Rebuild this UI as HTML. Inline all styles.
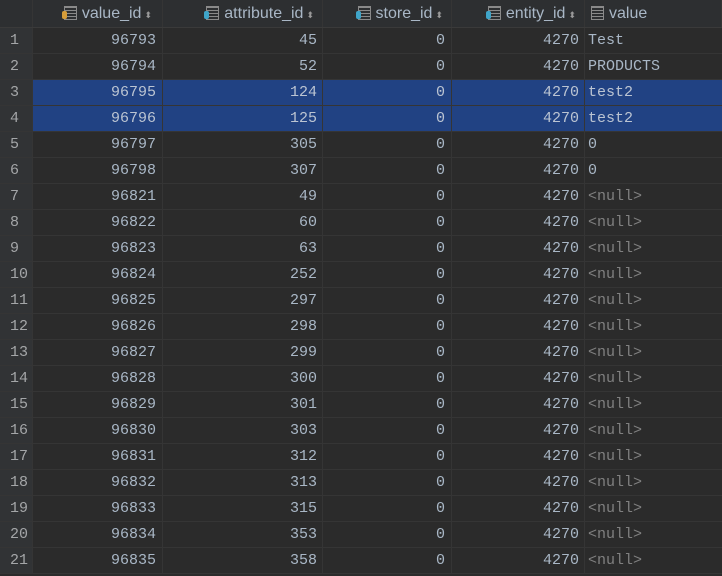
<!DOCTYPE html>
<html><head><style>
body{margin:0;width:722px;height:576px;background:#2b2b2b;overflow:hidden;position:relative;font-family:"Liberation Mono",monospace;font-size:15px;color:#a9b7c6}
.r{position:absolute;left:0;width:722px;height:25px;border-bottom:1px solid #353535;line-height:26px}
.c{position:absolute;top:0;height:100%;box-sizing:border-box;border-right:1px solid #353535;white-space:nowrap}
.g{left:0;width:33px;background:#313335;padding-left:10px;color:#a4a6a8}
.a{left:33px;width:130px;text-align:right;padding-right:6px}
.b{left:163px;width:160px;text-align:right;padding-right:5px}
.d{left:323px;width:129px;text-align:right;padding-right:6px}
.e{left:452px;width:133px;text-align:right;padding-right:5px}
.f{left:585px;width:137px;padding-left:3px;border-right:none}
.s .a,.s .b,.s .d,.s .e,.s .f{background:#214283;color:#bbc4d2}
.n{color:#808080}
.h{position:absolute;top:0;left:0;width:722px;height:27px;background:#2d2f31;border-bottom:1px solid #3a3a3a;font-family:"Liberation Sans",sans-serif;font-size:16px;line-height:27px;color:#a9b7c6}
.h .c{border-right:1px solid #353535}
.ic{display:inline-block;width:11px;height:12px;border:1px solid #8a8a8a;vertical-align:-2px;margin-right:5px;position:relative;background:repeating-linear-gradient(#8a8a8a 0 1px,transparent 1px 3px)}
.k{position:absolute;left:-3px;top:4px;width:5px;height:8px;background:#d69d3a;border-radius:2px}
.kb{background:#3fa5c9}
.ar{font-size:9px;color:#999;margin-left:3px}
</style></head><body>
<div class="h">
<div class="c g" style="background:#2d2f31"></div>
<div class="c a" style="padding-right:10px"><span class="ic"><span class="k"></span></span>value_id<span class="ar">⬍</span></div>
<div class="c b" style="padding-right:8px"><span class="ic"><span class="k kb"></span></span>attribute_id<span class="ar">⬍</span></div>
<div class="c d" style="padding-right:8px"><span class="ic"><span class="k kb"></span></span>store_id<span class="ar">⬍</span></div>
<div class="c e" style="padding-right:8px"><span class="ic"><span class="k kb"></span></span>entity_id<span class="ar">⬍</span></div>
<div class="c f" style="padding-left:6px"><span class="ic"></span>value</div>
</div>
<div class="r" style="top:28px"><div class="c g">1</div><div class="c a">96793</div><div class="c b">45</div><div class="c d">0</div><div class="c e">4270</div><div class="c f">Test</div></div>
<div class="r" style="top:54px"><div class="c g">2</div><div class="c a">96794</div><div class="c b">52</div><div class="c d">0</div><div class="c e">4270</div><div class="c f">PRODUCTS</div></div>
<div class="r s" style="top:80px"><div class="c g">3</div><div class="c a">96795</div><div class="c b">124</div><div class="c d">0</div><div class="c e">4270</div><div class="c f">test2</div></div>
<div class="r s" style="top:106px"><div class="c g">4</div><div class="c a">96796</div><div class="c b">125</div><div class="c d">0</div><div class="c e">4270</div><div class="c f">test2</div></div>
<div class="r" style="top:132px"><div class="c g">5</div><div class="c a">96797</div><div class="c b">305</div><div class="c d">0</div><div class="c e">4270</div><div class="c f">0</div></div>
<div class="r" style="top:158px"><div class="c g">6</div><div class="c a">96798</div><div class="c b">307</div><div class="c d">0</div><div class="c e">4270</div><div class="c f">0</div></div>
<div class="r" style="top:184px"><div class="c g">7</div><div class="c a">96821</div><div class="c b">49</div><div class="c d">0</div><div class="c e">4270</div><div class="c f n">&lt;null&gt;</div></div>
<div class="r" style="top:210px"><div class="c g">8</div><div class="c a">96822</div><div class="c b">60</div><div class="c d">0</div><div class="c e">4270</div><div class="c f n">&lt;null&gt;</div></div>
<div class="r" style="top:236px"><div class="c g">9</div><div class="c a">96823</div><div class="c b">63</div><div class="c d">0</div><div class="c e">4270</div><div class="c f n">&lt;null&gt;</div></div>
<div class="r" style="top:262px"><div class="c g">10</div><div class="c a">96824</div><div class="c b">252</div><div class="c d">0</div><div class="c e">4270</div><div class="c f n">&lt;null&gt;</div></div>
<div class="r" style="top:288px"><div class="c g">11</div><div class="c a">96825</div><div class="c b">297</div><div class="c d">0</div><div class="c e">4270</div><div class="c f n">&lt;null&gt;</div></div>
<div class="r" style="top:314px"><div class="c g">12</div><div class="c a">96826</div><div class="c b">298</div><div class="c d">0</div><div class="c e">4270</div><div class="c f n">&lt;null&gt;</div></div>
<div class="r" style="top:340px"><div class="c g">13</div><div class="c a">96827</div><div class="c b">299</div><div class="c d">0</div><div class="c e">4270</div><div class="c f n">&lt;null&gt;</div></div>
<div class="r" style="top:366px"><div class="c g">14</div><div class="c a">96828</div><div class="c b">300</div><div class="c d">0</div><div class="c e">4270</div><div class="c f n">&lt;null&gt;</div></div>
<div class="r" style="top:392px"><div class="c g">15</div><div class="c a">96829</div><div class="c b">301</div><div class="c d">0</div><div class="c e">4270</div><div class="c f n">&lt;null&gt;</div></div>
<div class="r" style="top:418px"><div class="c g">16</div><div class="c a">96830</div><div class="c b">303</div><div class="c d">0</div><div class="c e">4270</div><div class="c f n">&lt;null&gt;</div></div>
<div class="r" style="top:444px"><div class="c g">17</div><div class="c a">96831</div><div class="c b">312</div><div class="c d">0</div><div class="c e">4270</div><div class="c f n">&lt;null&gt;</div></div>
<div class="r" style="top:470px"><div class="c g">18</div><div class="c a">96832</div><div class="c b">313</div><div class="c d">0</div><div class="c e">4270</div><div class="c f n">&lt;null&gt;</div></div>
<div class="r" style="top:496px"><div class="c g">19</div><div class="c a">96833</div><div class="c b">315</div><div class="c d">0</div><div class="c e">4270</div><div class="c f n">&lt;null&gt;</div></div>
<div class="r" style="top:522px"><div class="c g">20</div><div class="c a">96834</div><div class="c b">353</div><div class="c d">0</div><div class="c e">4270</div><div class="c f n">&lt;null&gt;</div></div>
<div class="r" style="top:548px"><div class="c g">21</div><div class="c a">96835</div><div class="c b">358</div><div class="c d">0</div><div class="c e">4270</div><div class="c f n">&lt;null&gt;</div></div>
</body></html>
